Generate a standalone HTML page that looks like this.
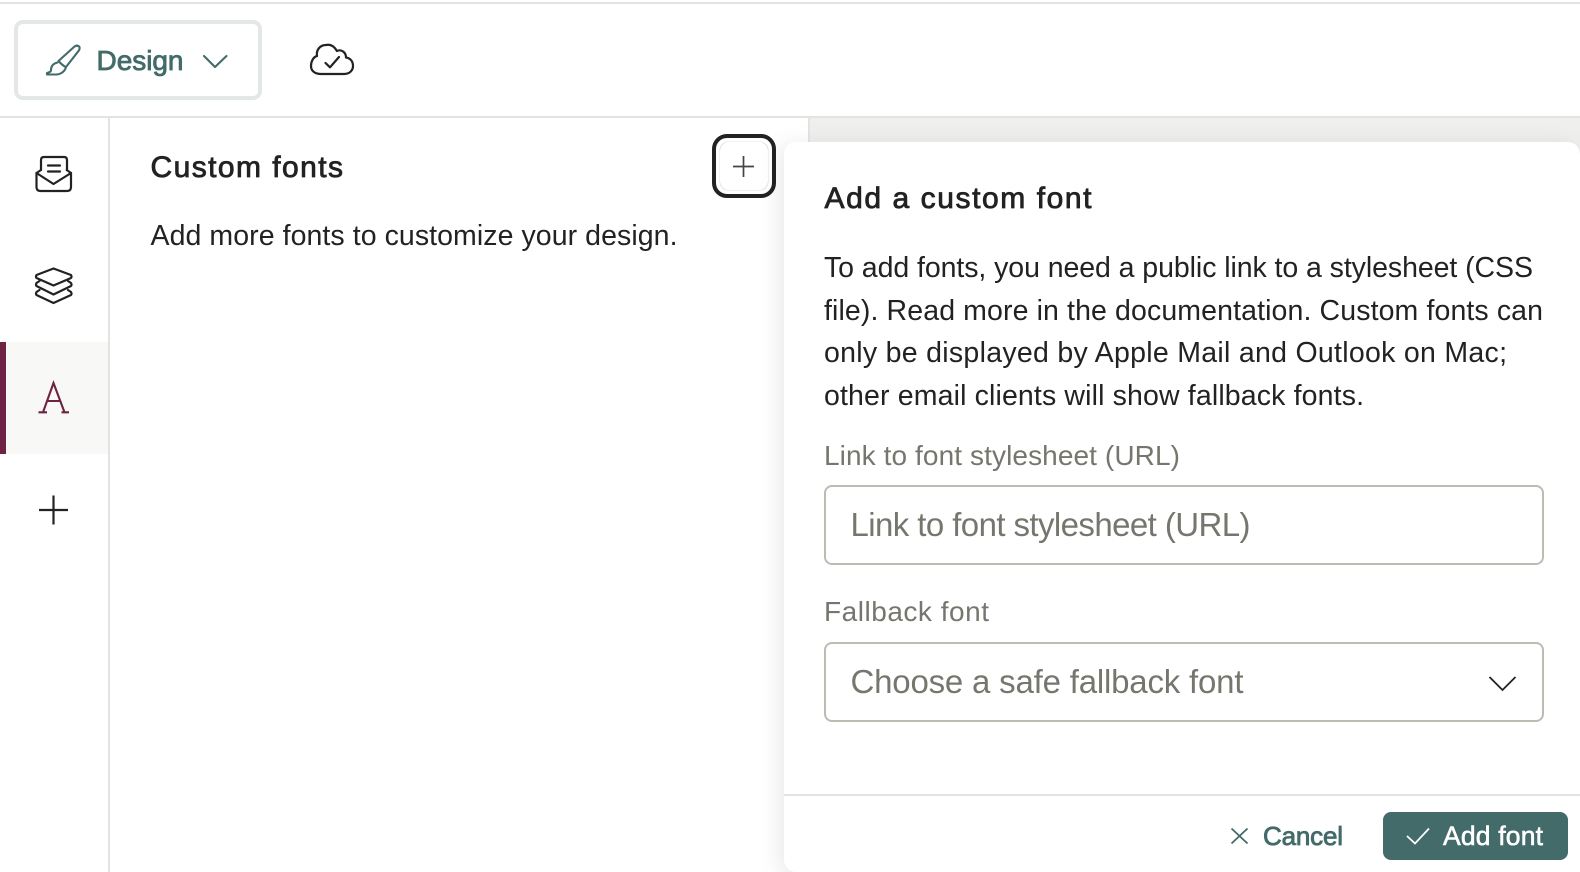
<!DOCTYPE html>
<html>
<head>
<meta charset="utf-8">
<style>
html,body{margin:0;padding:0;background:#fff;width:1580px;height:872px;overflow:hidden}
svg{display:block}
text{font-family:"Liberation Sans",sans-serif;fill:#222}
.m{stroke:#222;stroke-width:.8px}
.g{fill:#76766e}
.t{fill:#426b69;stroke:#426b69;stroke-width:.8px}
.w{fill:#fff;stroke:#fff;stroke-width:.6px}
</style>
</head>
<body>
<svg width="1580" height="872" viewBox="0 0 1580 872" xmlns="http://www.w3.org/2000/svg">
<defs>
<filter id="s" x="-10%" y="-10%" width="120%" height="120%"><feDropShadow dx="-4" dy="3" stdDeviation="10" flood-color="#000" flood-opacity=".09"/></filter>
</defs>
<rect width="1580" height="872" fill="#fff"/>
<rect x="0" y="2" width="1580" height="2" fill="#e3e3e1"/>
<rect x="0" y="116" width="1580" height="2" fill="#e3e3e1"/>
<rect x="108" y="118" width="2" height="754" fill="#e3e3e1"/>
<rect x="810" y="118" width="770" height="754" fill="#efefee"/>
<rect x="808" y="118" width="2" height="30" fill="#e3e3e1"/>
<rect x="16" y="22" width="244" height="76" rx="7" fill="#fff" stroke="#e3e8e7" stroke-width="4"/>
<g fill="none" stroke="#426b69" stroke-width="2.100" stroke-linecap="round" stroke-linejoin="round">
<path d="M58.500 61L74.500 46.500Q77.500 44.500 79.500 47Q80 49 78.500 51L66 67Q63 66 58.500 61Z"/>
<path d="M57.500 62.500C52.500 63.500 51 67 51 70C51 72 49 72.500 47 73V74.500H56C61 74.500 65 71 65.800 67.500"/>
<path d="M204 56L215 67L226.500 56"/>
</g>
<text x="96.500" y="70" font-size="28" class="t" textLength="87" lengthAdjust="spacing">Design</text>
<g fill="none" stroke="#222" stroke-width="2.200" stroke-linecap="round" stroke-linejoin="round">
<path d="M321 74H344C350 74 353 70 353 66C353 61 350 58 346 57.500C346 52 341 49 337 51C334 46 330 44 326 45C320 45 316 50 317 56C313 57 311 62 311 66C311 71 315 74 321 74Z"/>
<path d="M325.500 63L330 67.300L339 57"/>
<path d="M41 170V160Q41 157 44 157H64Q67 157 67 160V170"/>
<path d="M41 170L36.500 173L53.500 184L71 173L66.700 170"/>
<path d="M36.500 173V187Q36.500 191 40.500 191H67Q71 191 71 187V173"/>
<path d="M48 165.500H60M48 171.500H60"/>
<path d="M53.500 268.500L71 275Q72 277 71 278L53.500 285.500L36.500 278Q35.500 277 36.500 275Z"/>
<path d="M39.500 281L36.500 283Q35.500 285 36.500 286L53.500 294.500L71 286Q72 285 71 283L68 281"/>
<path d="M39.500 290L36.500 292Q35.500 294 36.500 295L53.500 303L71 295Q72 294 71 292L68 290"/>
</g>
<rect x="0" y="342" width="108" height="112" fill="#f8f8f6"/>
<rect x="0" y="342" width="6" height="112" fill="#6e2342"/>
<path d="M38.500 412.300H47M61.500 412.300H69M43 412.300L53.500 383L64.500 412.300M46.500 401H61" fill="none" stroke="#6e2342" stroke-width="2.100"/>
<path d="M39 510H68M53.500 495.500V524.500" fill="none" stroke="#222" stroke-width="2.200"/>
<text x="150.500" y="177" font-size="30" class="m" textLength="192.500" lengthAdjust="spacing">Custom fonts</text>
<text x="150.500" y="245" font-size="28.500" textLength="527" lengthAdjust="spacing">Add more fonts to customize your design.</text>
<rect x="714" y="136" width="60" height="60" rx="13" fill="#fff" stroke="#222" stroke-width="4"/>
<rect x="720" y="142" width="48" height="48" rx="8" fill="none" stroke="#e4e4e2" stroke-width="1"/>
<rect x="726" y="142" width="36" height="48" fill="#fff"/>
<rect x="720" y="150" width="48" height="32" fill="#fff"/>
<path d="M733 166.500H754M743.500 156V177" fill="none" stroke="#444" stroke-width="1.700"/>
<path d="M784 858V156Q784 142 798 142H1566Q1580 142 1580 156V872H798Q784 872 784 858Z" fill="#fff" filter="url(#s)"/>
<text x="824.500" y="208" font-size="30" class="m" textLength="267" lengthAdjust="spacing">Add a custom font</text>
<text x="824" y="277" font-size="28.500" textLength="709" lengthAdjust="spacing">To add fonts, you need a public link to a stylesheet (CSS</text>
<text x="824" y="320" font-size="28.500" textLength="719" lengthAdjust="spacing">file). Read more in the documentation. Custom fonts can</text>
<text x="824" y="362" font-size="28.500" textLength="683" lengthAdjust="spacing">only be displayed by Apple Mail and Outlook on Mac;</text>
<text x="824" y="405" font-size="28.500" textLength="540" lengthAdjust="spacing">other email clients will show fallback fonts.</text>
<text x="824" y="465" font-size="28" class="g" textLength="356" lengthAdjust="spacing">Link to font stylesheet (URL)</text>
<rect x="825" y="486" width="718" height="78" rx="7" fill="#fff" stroke="#bcbcb5" stroke-width="2"/>
<text x="850.500" y="536" font-size="33" class="g" textLength="400" lengthAdjust="spacing">Link to font stylesheet (URL)</text>
<text x="824" y="621" font-size="28" class="g" textLength="165" lengthAdjust="spacing">Fallback font</text>
<rect x="825" y="643" width="718" height="78" rx="7" fill="#fff" stroke="#bcbcb5" stroke-width="2"/>
<text x="850.500" y="693" font-size="33" class="g" textLength="393" lengthAdjust="spacing">Choose a safe fallback font</text>
<path d="M1489.500 677L1502.500 690L1515.500 677" fill="none" stroke="#222" stroke-width="1.800"/>
<rect x="784" y="794" width="796" height="2" fill="#e3e3e1"/>
<path d="M1231.500 828.500L1247.500 843.500M1247.500 828.500L1231.500 843.500" stroke="#426b69" stroke-width="1.800" fill="none"/>
<text x="1263" y="845" font-size="26" class="t" textLength="80" lengthAdjust="spacing">Cancel</text>
<rect x="1383" y="812" width="185" height="48" rx="8" fill="#426b69"/>
<path d="M1407 836L1415 843.500L1429 828.500" stroke="#fff" stroke-width="1.800" fill="none"/>
<text x="1443" y="845" font-size="26.500" class="w" textLength="100" lengthAdjust="spacing">Add font</text>
</svg>
</body>
</html>
